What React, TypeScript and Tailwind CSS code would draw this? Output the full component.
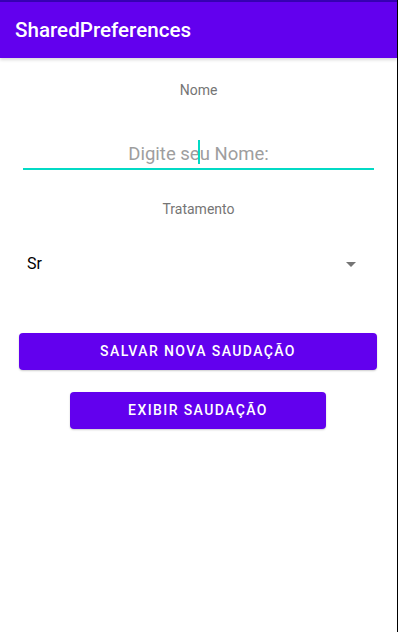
export default function App() {
  const font = { fontFamily: "Roboto, 'Liberation Sans', sans-serif" };
  return (
    <div className="flex h-[632px] w-[398px] bg-white" style={font}>
      <div className="flex flex-1 flex-col">
        <div className="h-[2px] bg-[#3700b3]" />
        <header className="flex h-[56px] items-center bg-[#6200ee] px-[15px] shadow-[0_2px_3px_rgba(0,0,0,0.15)]">
          <h1 className="text-[20.6px] font-medium text-white">SharedPreferences</h1>
        </header>

        <main className="flex flex-col">
          <p className="mt-[22px] text-center text-[14px] leading-[20px] text-[#757575]">Nome</p>

          <div className="mx-[23px] mt-[40px] flex h-[30px] items-center justify-center border-b-2 border-[#03dac5]">
            <span className="relative text-[18.5px] leading-[24px] text-[#9e9e9e]">
              Digite se
              <span className="absolute left-[70px] top-[-2px] h-[24px] w-[2px] bg-[#03dac5]" />
              u Nome:
            </span>
          </div>

          <p className="mt-[29px] text-center text-[14px] leading-[20px] text-[#757575]">Tratamento</p>

          <div className="mx-[27px] mt-[33px] flex h-[24px] items-center justify-between">
            <span className="text-[16px] text-black">Sr</span>
            <svg width="10" height="5" viewBox="0 0 10 5" className="mr-[14px]">
              <path d="M0 0h10L5 5z" fill="#757575" />
            </svg>
          </div>

          <button className="ml-[19px] mr-[20px] mt-[57px] h-[37px] rounded-[4px] bg-[#6200ee] text-[14px] font-medium tracking-[0.1em] text-white shadow-[0_1px_2px_rgba(0,0,0,0.2)]">
            SALVAR NOVA SAUDAÇÃO
          </button>
          <button className="ml-[70px] mt-[22px] h-[37px] w-[256px] rounded-[4px] bg-[#6200ee] text-[14px] font-medium tracking-[0.1em] text-white shadow-[0_1px_2px_rgba(0,0,0,0.2)]">
            EXIBIR SAUDAÇÃO
          </button>
        </main>
      </div>
      <div className="w-px bg-black" />
    </div>
  );
}
